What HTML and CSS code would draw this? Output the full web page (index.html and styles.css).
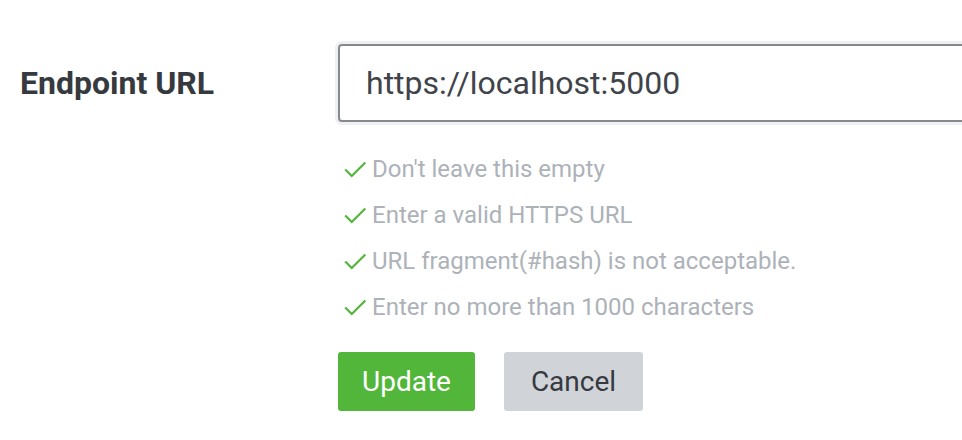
FILE: index.html
```html
<!DOCTYPE html>
<html lang="en">
<head>
  <meta charset="UTF-8">
  <title>Endpoint URL</title>
  <link rel="stylesheet" href="styles.css">
</head>
<body>
<main class="form">
  <div class="form-row">
    <label class="form-label" for="eleUrl">Endpoint URL</label>
    <div class="form-field">
      <input id="eleUrl" class="form-input" type="text" value="https://localhost:5000">
      <ul class="rules">
        <li class="rule">
          <svg class="rule-icon" viewBox="0 0 24 24"><path d="M3 12.5l6 6L21.5 6"/></svg>
          Don't leave this empty
        </li>
        <li class="rule">
          <svg class="rule-icon" viewBox="0 0 24 24"><path d="M3 12.5l6 6L21.5 6"/></svg>
          Enter a valid HTTPS URL
        </li>
        <li class="rule">
          <svg class="rule-icon" viewBox="0 0 24 24"><path d="M3 12.5l6 6L21.5 6"/></svg>
          URL fragment(#hash) is not acceptable.
        </li>
        <li class="rule">
          <svg class="rule-icon" viewBox="0 0 24 24"><path d="M3 12.5l6 6L21.5 6"/></svg>
          Enter no more than 1000 characters
        </li>
      </ul>
      <div class="actions">
        <button class="btn btn-primary" type="button">Update</button>
        <button class="btn btn-default" type="button">Cancel</button>
      </div>
    </div>
  </div>
</main>
</body>
</html>
```

FILE: styles.css
```css
body {
  margin: 0;
  font-family: Roboto, "Liberation Sans", sans-serif;
  background: #fff;
  overflow: hidden;
}
.form {
  padding: 40px 0 0 20px;
}
.form-row {
  display: flex;
}
.form-label {
  width: 314px;
  flex-shrink: 0;
  padding-top: 4px;
  font-size: 32px;
  font-weight: 700;
  color: #363a3f;
  line-height: 78px;
}
.form-field {
  flex-grow: 1;
  min-width: 0;
  overflow: hidden;
  padding: 4px 0 4px 4px;
}
.form-input {
  display: block;
  width: 700px;
  height: 78px;
  box-sizing: border-box;
  margin: 0;
  padding: 0 26px;
  border: 2px solid #868a90;
  border-radius: 4px;
  box-shadow: 0 0 0 3px #eff0f2;
  outline: 0;
  font: 32px Roboto, "Liberation Sans", sans-serif;
  color: #40444a;
}
.rules {
  list-style: none;
  margin: 24px 0 0;
  padding: 0 0 0 4px;
}
.rule {
  display: flex;
  align-items: center;
  height: 46px;
  font-size: 24px;
  color: #adb2b9;
}
.rule-icon {
  width: 26px;
  height: 26px;
  margin-right: 4px;
  fill: none;
  stroke: #52b63a;
  stroke-width: 2;
}
.actions {
  display: flex;
  gap: 29px;
  margin-top: 22px;
}
.btn {
  height: 59px;
  border: 0;
  border-radius: 3px;
  padding: 0;
  font: 28px Roboto, "Liberation Sans", sans-serif;
}
.btn-primary {
  width: 137px;
  background-color: #52b63a;
  color: #fff;
}
.btn-default {
  width: 139px;
  background-color: #d0d3d8;
  color: #363a3f;
}
```
